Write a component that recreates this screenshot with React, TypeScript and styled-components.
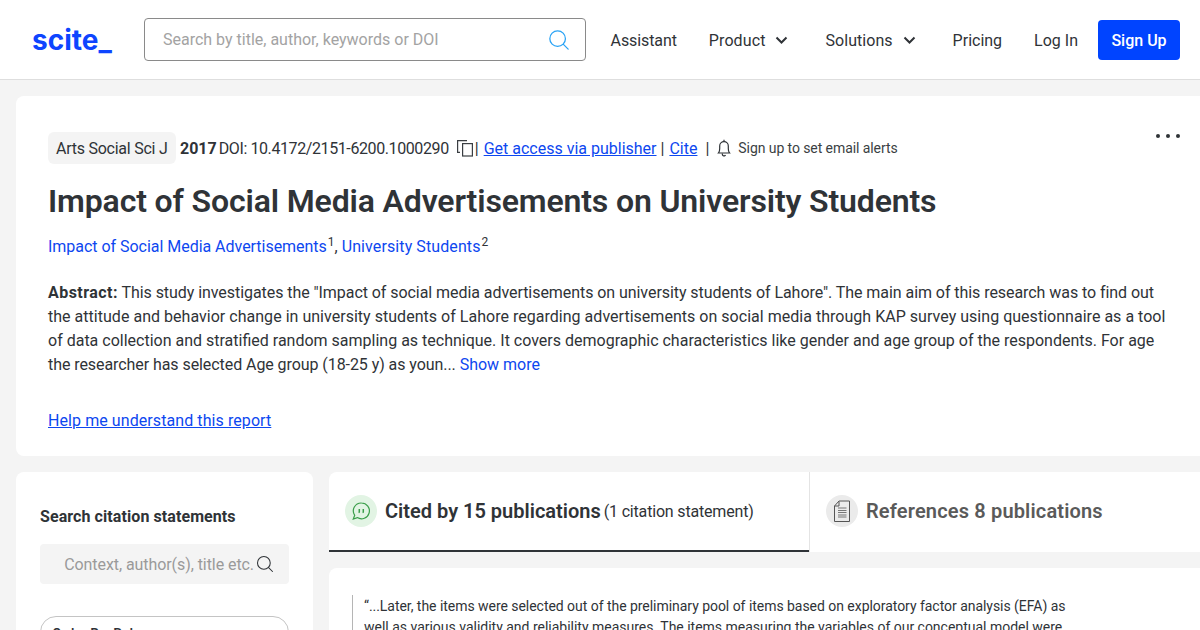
import React from "react";
import styled, { createGlobalStyle } from "styled-components";

const Global = createGlobalStyle`
  html, body { margin: 0; padding: 0; background: #f4f4f4; height: 630px; overflow: hidden; }
  body { font-family: Roboto, "Liberation Sans", sans-serif; color: #2f3337; font-size: 16px; }
  * { box-sizing: border-box; }
`;

const Header = styled.header`
  height: 80px; background: #fff; border-bottom: 1px solid #dedede;
  display: flex; align-items: center; padding: 0 20px 0 32px;
`;
const Logo = styled.div`
  width: 112px; color: #0e45ff; font-family: Inter, sans-serif; font-weight: 700; font-size: 28px; line-height: 30px; padding-top: 1px;
`;
const SearchBox = styled.div`
  width: 442px; height: 43px; border: 1px solid #8a8a8a; border-radius: 4px; display: flex; align-items: center; justify-content: space-between;
  padding: 0 15px 0 18px; color: #a3a3a3; font-size: 16px;
`;
const Nav = styled.nav`
  display: flex; align-items: center; margin-left: auto; font-size: 16px; color: #2f3337;
`;
const NavItem = styled.span<{ $gap: number; $ls?: number }>`
  display: flex; align-items: center; margin-right: ${(p) => p.$gap}px; white-space: nowrap; padding-top: 1px;
  letter-spacing: ${(p) => p.$ls ?? 0}px;
`;
const Caret = styled.svg`
  margin-left: 10px; width: 14px; height: 14px;
`;
const SignUp = styled.button`
  width: 82px; height: 40px; background: #0044ff; color: #fff; border: 0; border-radius: 4px; font: 500 16px Roboto, sans-serif; padding: 1px 0 0;
`;

const Main = styled.main`
  padding: 16px 0 0 16px; display: flex; flex-direction: column; gap: 16px;
`;
const TopCard = styled.section`
  height: 360px; background: #fff; border-radius: 8px 0 0 8px; padding: 36px 32px 0 32px; position: relative;
`;
const Meta = styled.div`
  display: flex; align-items: center; height: 32px; white-space: nowrap; font-size: 16px;
`;
const Journal = styled.span`
  background: #f4f4f4; border-radius: 6px; height: 32px; line-height: 33px; padding: 0 8px; margin-right: 4px; width: 128px; letter-spacing: -0.25px;
`;
const Strong = styled.b`
  font-weight: 700; margin-right: 2px;
`;
const Doi = styled.span`
  letter-spacing: -0.4px;
`;
const CopyIcon = styled.svg`
  margin: 0 2px 0 6px; flex: none;
`;
const TextLink = styled.a`
  color: #0d47f0; text-decoration: underline; cursor: pointer;
`;
const Sep = styled.span<{ $l: number; $r: number }>`
  margin: 0 ${(p) => p.$r}px 0 ${(p) => p.$l}px;
`;
const Alert = styled.span`
  font-size: 14px; margin-left: 6px; letter-spacing: -0.08px; color: #3b3f43;
`;
const Dots = styled.div`
  position: absolute; right: 20px; top: 38px; display: flex; gap: 6px;
`;
const Dot = styled.i`
  width: 4px; height: 4px; border-radius: 50%; background: #2f3337; display: block;
`;
const Title = styled.h1`
  margin: 18px 0 0; font-size: 32px; line-height: 38px; font-weight: 600; color: #2f3337; white-space: nowrap; letter-spacing: -0.14px;
`;
const Authors = styled.div`
  margin-top: 15px; line-height: 24px; color: #2f3337;
`;
const Author = styled.a<{ $ls: number }>`
  color: #0d47f0; letter-spacing: ${(p) => p.$ls}px;
`;
const Sup = styled.sup`
  font-size: 12px; line-height: 0; margin-left: 1px;
`;
const Abstract = styled.div`
  margin-top: 22px; line-height: 24px; white-space: nowrap;
`;
const TextLine = styled.span<{ $ls: number }>`
  display: block; letter-spacing: ${(p) => p.$ls}px;
`;
const AbstractLabel = styled.b`
  letter-spacing: 0.45px;
`;
const ShowMore = styled.a`
  color: #0d47f0; letter-spacing: 0;
`;
const Help = styled.div`
  margin-top: 32px; line-height: 24px; letter-spacing: 0.08px;
`;

const Lower = styled.div`
  display: flex; gap: 16px; align-items: flex-start;
`;
const Side = styled.aside`
  width: 297px; height: 300px; background: #fff; border-radius: 8px; padding: 33px 24px; flex: none;
`;
const SideTitle = styled.div`
  font-weight: 700; font-size: 16px; line-height: 24px; letter-spacing: 0.08px;
`;
const SideSearch = styled.div`
  margin-top: 15px; height: 40px; background: #f4f4f4; border-radius: 4px; display: flex; align-items: center; justify-content: flex-end; gap: 2px; padding-right: 15px; color: #9a9a9a; font-size: 16px; letter-spacing: -0.07px;
`;
const SortBox = styled.div`
  margin-top: 32px; height: 60px; border: 1px solid #c4c4c4; border-radius: 16px; padding: 9px 11px; font-size: 14px; font-weight: 500;
`;
const Content = styled.div`
  flex: 1; display: flex; flex-direction: column; gap: 16px; min-width: 0;
`;
const Tabs = styled.div`
  display: flex; height: 80px; background: #fff; border-radius: 8px 0 0 0;
`;
const Tab = styled.div<{ $active?: boolean }>`
  display: flex; align-items: center; padding-left: 16px; gap: 8px; white-space: nowrap;
  ${(p) => p.$active ? "width: 480px; border-bottom: 2px solid #2f3337;" : "flex: 1; border-left: 1px solid #e4e4e4; color: #5a5a5a; padding-bottom: 2px;"}
`;
const TabIcon = styled.div<{ $bg: string }>`
  width: 32px; height: 32px; border-radius: 50%; background: ${(p) => p.$bg}; display: flex; align-items: center; justify-content: center; flex: none;
`;
const TabTitle = styled.span<{ $ls?: number }>`
  font-size: 20px; font-weight: 600; letter-spacing: ${(p) => p.$ls ?? 0}px;
`;
const TabNote = styled.span`
  font-size: 16px; margin-left: -5px; letter-spacing: -0.18px;
`;
const Results = styled.div`
  height: 200px; background: #fff; border-radius: 8px 0 0 0; padding: 27px 0 0 23px;
`;
const Quote = styled.div`
  border-left: 1px solid #b5b5b5; padding-left: 11px; padding-top: 1px; font-size: 14px; line-height: 21px; white-space: nowrap;
`;

const Search = ({ color, size }: { color: string; size: number }) => (
  <svg width={size} height={size} viewBox="0 0 24 24" fill="none" stroke={color} strokeWidth="1.4" strokeLinecap="round">
    <circle cx="10.5" cy="10.5" r="8.5" />
    <path d="M16.8 16.8 22 22" />
  </svg>
);
const Chevron = () => (
  <Caret viewBox="0 0 14 14" fill="none" stroke="#2f3337" strokeWidth="2">
    <path d="M1.5 4.500 6.500 9.500 11.500 4.500" />
  </Caret>
);

export default function App() {
  return (
    <>
      <Global />
      <Header>
        <Logo>scite_</Logo>
        <SearchBox>
          Search by title, author, keywords or DOI
          <Search color="#2aa3f5" size={22} />
        </SearchBox>
        <Nav>
          <NavItem $gap={32} $ls={-0.1}>Assistant</NavItem>
          <NavItem $gap={36} $ls={0.1}>Product<Chevron /></NavItem>
          <NavItem $gap={36} $ls={0.05}>Solutions<Chevron /></NavItem>
          <NavItem $gap={32}>Pricing</NavItem>
          <NavItem $gap={20}>Log In</NavItem>
          <SignUp>Sign Up</SignUp>
        </Nav>
      </Header>
      <Main>
        <TopCard>
          <Meta>
            <Journal>Arts Social Sci J</Journal>
            <Strong>2017</Strong>
            <Doi>DOI: 10.4172/2151-6200.1000290</Doi>
            <CopyIcon width="18" height="18" viewBox="0 0 18 18" fill="none" stroke="#3a3e42" strokeWidth="1.2">
              <path d="M12 1.600H2.600V13.400H5" />
              <rect x="7.600" y="4.600" width="9.800" height="12.400" />
            </CopyIcon>
            <Sep $l={0} $r={5}>|</Sep>
            <TextLink>Get access via publisher</TextLink>
            <Sep $l={4} $r={5}>|</Sep>
            <TextLink>Cite</TextLink>
            <Sep $l={8} $r={7}>|</Sep>
            <svg width="16" height="18" viewBox="0 0 16 18" fill="none" stroke="#2f3337" strokeWidth="1.2">
              <path d="M2.500 14c.8-.9 1.200-2 1.200-4.500V7a4.300 4.300 0 0 1 8.600 0v2.500c0 2.500.4 3.600 1.200 4.500Z" />
              <path d="M6.500 14.500a1.600 1.600 0 0 0 3 1.500M8 .8v1.800" />
            </svg>
            <Alert>Sign up to set email alerts</Alert>
          </Meta>
          <Dots><Dot /><Dot /><Dot /></Dots>
          <Title>Impact of Social Media Advertisements on University Students</Title>
          <Authors>
            <Author $ls={-0.03}>Impact of Social Media Advertisements</Author><Sup>1</Sup>, <Author $ls={0.1}>University Students</Author><Sup>2</Sup>
          </Authors>
          <Abstract>
            <TextLine $ls={-0.06}><AbstractLabel>Abstract:</AbstractLabel> This study investigates the "Impact of social media advertisements on university students of Lahore". The main aim of this research was to find out</TextLine>
            <TextLine $ls={0.025}>the attitude and behavior change in university students of Lahore regarding advertisements on social media through KAP survey using questionnaire as a tool</TextLine>
            <TextLine $ls={0}>of data collection and stratified random sampling as technique. It covers demographic characteristics like gender and age group of the respondents. For age</TextLine>
            <TextLine $ls={-0.07}>the researcher has selected Age group (18-25 y) as youn... <ShowMore>Show more</ShowMore></TextLine>
          </Abstract>
          <Help><TextLink>Help me understand this report</TextLink></Help>
        </TopCard>
        <Lower>
          <Side>
            <SideTitle>Search citation statements</SideTitle>
            <SideSearch>
              Context, author(s), title etc.
              <Search color="#2f3337" size={18} />
            </SideSearch>
            <SortBox>Order By: Relevance</SortBox>
          </Side>
          <Content>
            <Tabs>
              <Tab $active>
                <TabIcon $bg="#e2f4e4">
                  <svg width="20" height="20" viewBox="0 0 20 20" fill="none" stroke="#3a9e4a" strokeWidth="1.2">
                    <path d="M10.500 2a7.900 7.900 0 1 1-4.200 14.600L2.300 18l1.400-3.700A7.900 7.900 0 0 1 10.500 2Z" />
                    <path d="M8.300 8v2.700c0 .4-.3.8-.7 1M12.300 8v2.700c0 .4-.3.8-.7 1" strokeWidth="1.500" />
                  </svg>
                </TabIcon>
                <TabTitle>Cited by 15 publications</TabTitle>
                <TabNote>(1 citation statement)</TabNote>
              </Tab>
              <Tab>
                <TabIcon $bg="#ebebeb">
                  <svg width="22" height="22" viewBox="0 0 22 22" fill="none" stroke="#555" strokeWidth="1">
                    <path d="M8 1H18.500V21.500H3.500V6Z" />
                    <path d="M8 1.500V6H3.500" />
                    <path d="M7 8H15.500M7 10.500H15.500M7 12.500H15.500M7 15H15.500M7 17H15.500" strokeWidth="1.200" stroke="#777" />
                  </svg>
                </TabIcon>
                <TabTitle $ls={0.16}>References 8 publications</TabTitle>
              </Tab>
            </Tabs>
            <Results>
              <Quote>
                <TextLine $ls={-0.04}>“...Later, the items were selected out of the preliminary pool of items based on exploratory factor analysis (EFA) as</TextLine>
                <TextLine $ls={-0.01}>well as various validity and reliability measures. The items measuring the variables of our conceptual model were</TextLine>
              </Quote>
            </Results>
          </Content>
        </Lower>
      </Main>
    </>
  );
}
